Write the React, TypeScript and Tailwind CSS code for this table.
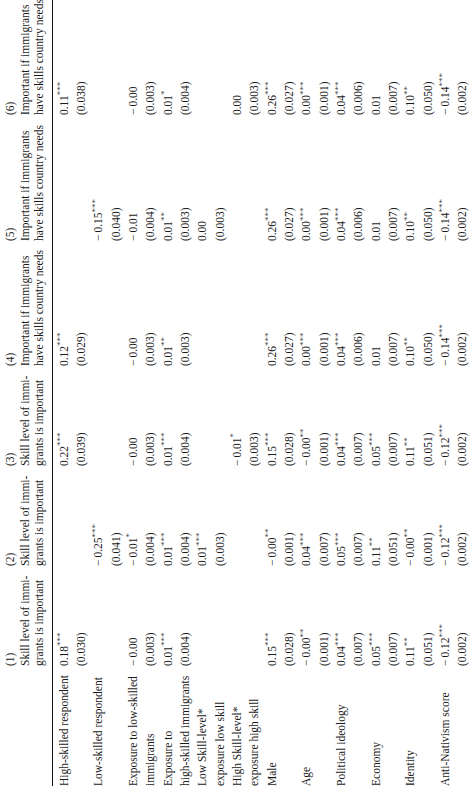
type Cell = [string, string] | null;

interface Row {
  label: string[];
  cells: Cell[];
}

const headers = [
  ['(1)', 'Skill level of immi-', 'grants is important'],
  ['(2)', 'Skill level of immi-', 'grants is important'],
  ['(3)', 'Skill level of immi-', 'grants is important'],
  ['(4)', 'Important if immigrants', 'have skills country needs'],
  ['(5)', 'Important if immigrants', 'have skills country needs'],
  ['(6)', 'Important if immigrants', 'have skills country needs'],
];

const rows: Row[] = [
  {
    label: ['High-skilled respondent'],
    cells: [['0.18***', '(0.030)'], null, ['0.22***', '(0.039)'], ['0.12***', '(0.029)'], null, ['0.11***', '(0.038)']],
  },
  {
    label: ['Low-skilled respondent'],
    cells: [null, ['−0.25***', '(0.041)'], null, null, ['−0.15***', '(0.040)'], null],
  },
  {
    label: ['Exposure to low-skilled', 'immigrants'],
    cells: [['−0.00', '(0.003)'], ['−0.01*', '(0.004)'], ['−0.00', '(0.003)'], ['−0.00', '(0.003)'], ['−0.01', '(0.004)'], ['−0.00', '(0.003)']],
  },
  {
    label: ['Exposure to', 'high-skilled immigrants'],
    cells: [['0.01***', '(0.004)'], ['0.01***', '(0.004)'], ['0.01***', '(0.004)'], ['0.01**', '(0.003)'], ['0.01**', '(0.003)'], ['0.01*', '(0.004)']],
  },
  {
    label: ['Low Skill-level*', 'exposure low skill'],
    cells: [null, ['0.01***', '(0.003)'], null, null, ['0.00', '(0.003)'], null],
  },
  {
    label: ['High Skill-level*', 'exposure high skill'],
    cells: [null, null, ['−0.01*', '(0.003)'], null, null, ['0.00', '(0.003)']],
  },
  {
    label: ['Male'],
    cells: [['0.15***', '(0.028)'], ['−0.00**', '(0.001)'], ['0.15***', '(0.028)'], ['0.26***', '(0.027)'], ['0.26***', '(0.027)'], ['0.26***', '(0.027)']],
  },
  {
    label: ['Age'],
    cells: [['−0.00**', '(0.001)'], ['0.04***', '(0.007)'], ['−0.00**', '(0.001)'], ['0.00***', '(0.001)'], ['0.00***', '(0.001)'], ['0.00***', '(0.001)']],
  },
  {
    label: ['Political ideology'],
    cells: [['0.04***', '(0.007)'], ['0.05***', '(0.007)'], ['0.04***', '(0.007)'], ['0.04***', '(0.006)'], ['0.04***', '(0.006)'], ['0.04***', '(0.006)']],
  },
  {
    label: ['Economy'],
    cells: [['0.05***', '(0.007)'], ['0.11**', '(0.051)'], ['0.05***', '(0.007)'], ['0.01', '(0.007)'], ['0.01', '(0.007)'], ['0.01', '(0.007)']],
  },
  {
    label: ['Identity'],
    cells: [['0.11**', '(0.051)'], ['−0.00**', '(0.001)'], ['0.11**', '(0.051)'], ['0.10**', '(0.050)'], ['0.10**', '(0.050)'], ['0.10**', '(0.050)']],
  },
  {
    label: ['Anti-Nativism score'],
    cells: [['−0.12***', '(0.002)'], ['−0.12***', '(0.002)'], ['−0.12***', '(0.002)'], ['−0.14***', '(0.002)'], ['−0.14***', '(0.002)'], ['−0.14***', '(0.002)']],
  },
];

// coefficient with significance stars raised, minus sign set apart like TeX math
function Coef({ value }: { value: string }) {
  const match = value.match(/^(−?)([^*]*)(\**)$/);
  const minus = match?.[1] ?? '';
  const number = match?.[2] ?? value;
  const stars = match?.[3] ?? '';
  return (
    <span>
      {minus && <span className="mr-[2px]">{minus}</span>}
      {number}
      {stars && <sup className="text-[9px] text-[#444]">{stars}</sup>}
    </span>
  );
}

const grid = 'grid grid-cols-[120px_100px_100px_100px_125px_126px_115px]';

function RegressionTable() {
  return (
    <div className="font-['Liberation_Serif',serif] text-[11.5px] text-[#1a1a1a]">
      <div className={`${grid} pt-[3px] leading-[14.5px]`}>
        <div />
        {headers.map((lines, i) => (
          <div key={i} className="whitespace-nowrap">
            {lines.map((line) => (
              <div key={line}>{line}</div>
            ))}
          </div>
        ))}
      </div>
      <div className="mt-[5px] border-t-[1.5px] border-[#111]" />
      <div className="mt-[3px] leading-[17.35px]">
        {rows.map((row) => (
          <div key={row.label.join(' ')} className={grid}>
            <div className="h-[34.7px] whitespace-nowrap">
              {row.label.map((line) => (
                <div key={line}>{line}</div>
              ))}
            </div>
            {row.cells.map((cell, i) => (
              <div key={i} className="whitespace-nowrap">
                {cell && (
                  <>
                    <div>
                      <Coef value={cell[0]} />
                    </div>
                    <div>{cell[1]}</div>
                  </>
                )}
              </div>
            ))}
          </div>
        ))}
      </div>
    </div>
  );
}

export default function App() {
  return (
    <div className="relative h-[786px] w-[474px] overflow-hidden bg-white">
      {/* the page is printed sideways: lay the table out upright, then turn it */}
      <div className="h-[474px] w-[786px] origin-top-left translate-y-[786px] -rotate-90">
        <RegressionTable />
      </div>
    </div>
  );
}
